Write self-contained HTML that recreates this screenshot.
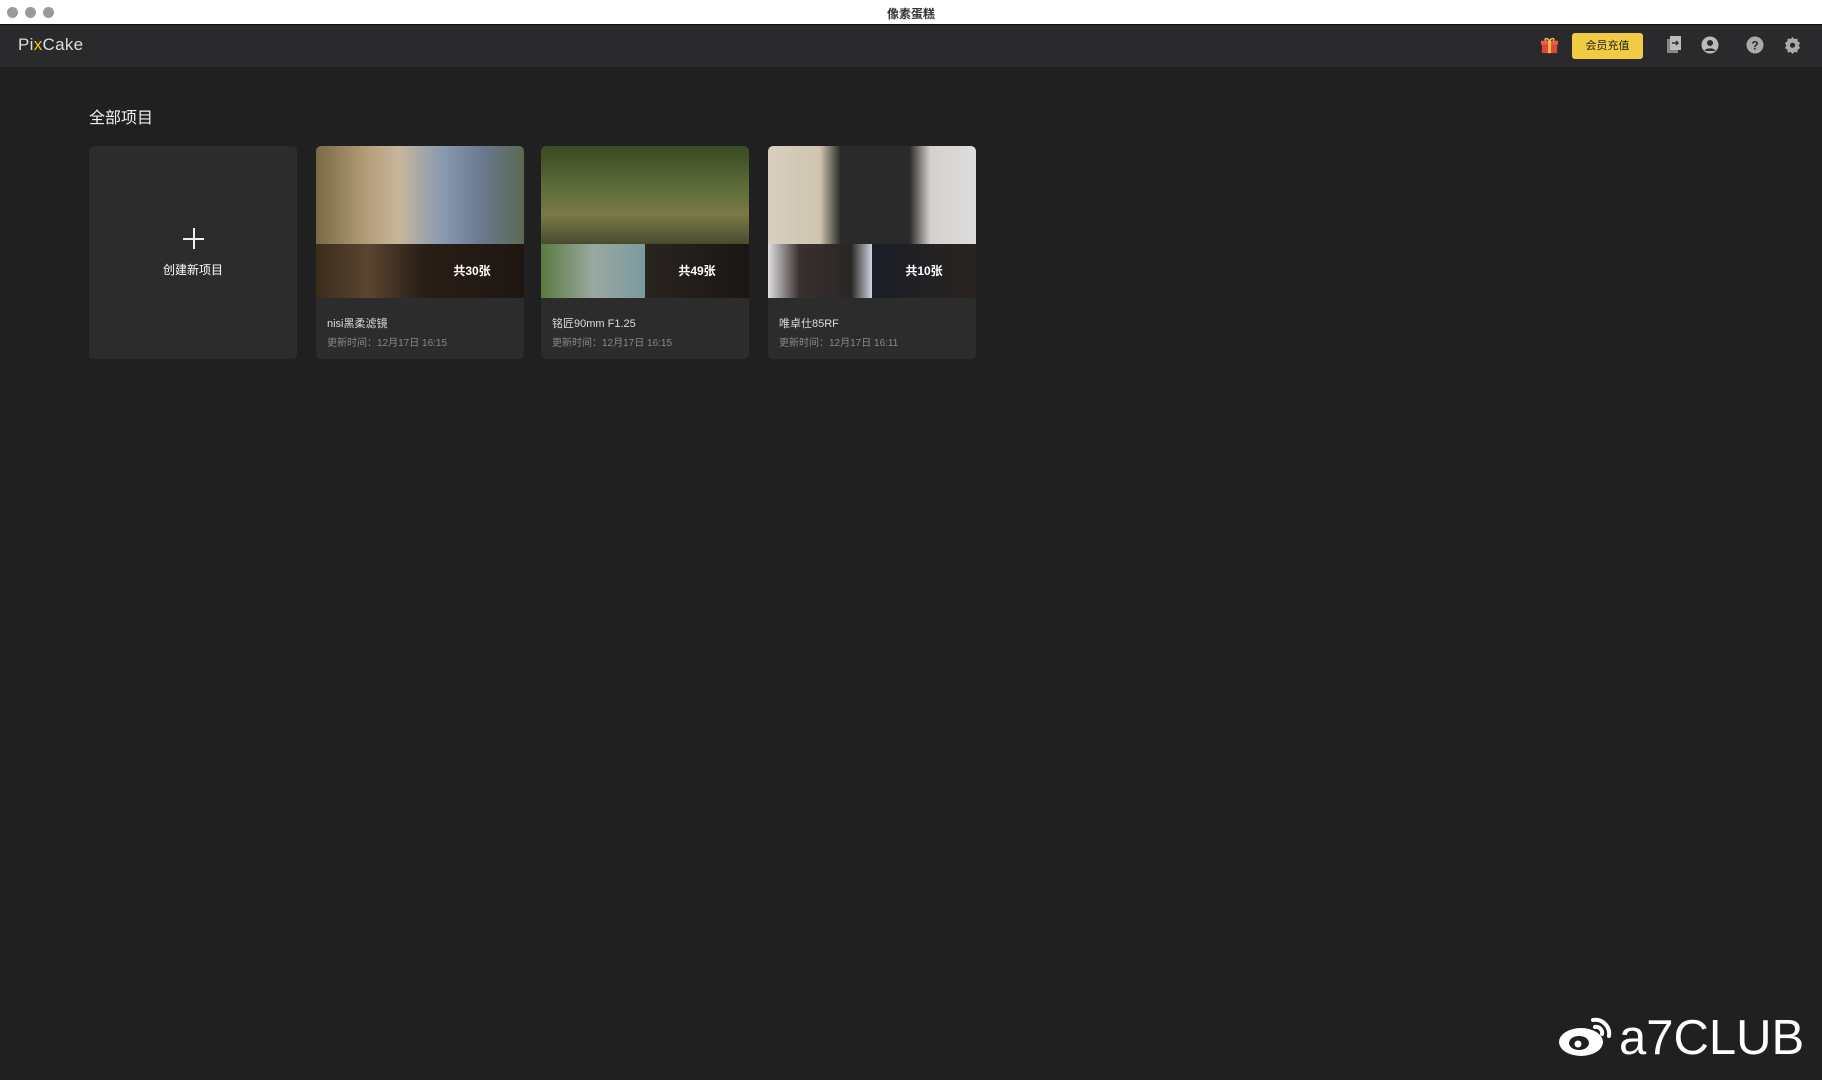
<!DOCTYPE html>
<html><head><meta charset="utf-8"><style>
*{margin:0;padding:0;box-sizing:border-box}
body{width:1822px;height:1080px;background:#202020;font-family:"Liberation Sans","Noto Sans CJK SC",sans-serif;position:relative;overflow:hidden;color:#ddd}
.tb{position:absolute;left:0;top:0;width:1822px;height:25px;background:#fff;border-bottom:1px solid #111}
.dot{position:absolute;top:7px;width:11px;height:11px;border-radius:50%;background:#9a9a9a}
.tt{position:absolute;top:5px;left:0;width:100%;text-align:center;font-size:12px;color:#333;font-weight:bold}
.nav{position:absolute;top:25px;left:0;width:1822px;height:42px;background:#2a2a2c}
.logo{position:absolute;left:18px;top:10px;font-size:17px;color:#ddd;letter-spacing:.3px}
.h{position:absolute;left:89px;top:104px;font-size:16px;color:#f0f0f0}
.card{position:absolute;top:146px;width:208px;height:213px;background:#2c2c2c;border-radius:5px;overflow:hidden}
.top{position:absolute;left:0;top:0;width:208px;height:98px}
.bl,.br{position:absolute;top:98px;width:104px;height:54px}
.bl{left:0}.br{left:104px}
.cnt{position:absolute;left:104px;top:98px;width:104px;height:54px;line-height:54px;text-align:center;font-size:12px;color:#fff;font-weight:bold}
.nm{position:absolute;left:11px;top:169px;font-size:11px;color:#ddd}
.dt{position:absolute;left:11px;top:188px;font-size:10px;color:#888}
</style></head><body>
<div class="tb"><div class="dot" style="left:7px"></div><div class="dot" style="left:25px"></div><div class="dot" style="left:43px"></div><div class="tt">像素蛋糕</div></div>
<div class="nav">
<div class="logo">Pi<span style="color:#f0c419">x</span>Cake</div>
<svg style="position:absolute;left:1540px;top:11px" width="19" height="19" viewBox="0 0 20 20"><rect x="2" y="6" width="16" height="12" rx="1" fill="#e2433c"/><rect x="1" y="5" width="18" height="4" fill="#f05a50"/><rect x="8.5" y="5" width="3" height="13" fill="#f5c542"/><path d="M10 5C7 1 4 3 6 5M10 5c3-4 6-2 4 0" stroke="#f5c542" stroke-width="1.5" fill="none"/></svg>
<div style="position:absolute;left:1572px;top:8px;width:71px;height:26px;background:#f2cb45;border-radius:3px;color:#222;font-size:11px;text-align:center;line-height:26px">会员充值</div>
<svg style="position:absolute;left:1666px;top:11px" width="16" height="18" viewBox="0 0 16 18"><rect x="1" y="3" width="11" height="14" fill="#888"/><rect x="4" y="0" width="11" height="14" fill="#bbb"/><path d="M6 7h6M10 5l2 2-2 2" stroke="#333" stroke-width="1.5" fill="none"/></svg>
<svg style="position:absolute;left:1701px;top:11px" width="18" height="18"><circle cx="9" cy="9" r="8.5" fill="#bbb"/><circle cx="9" cy="7" r="3" fill="#2a2a2c"/><path d="M3.5 15c1-3.5 10-3.5 11 0" fill="#2a2a2c"/></svg>
<svg style="position:absolute;left:1746px;top:11px" width="18" height="18"><circle cx="9" cy="9" r="8.5" fill="#aaa"/><text x="9" y="13.5" text-anchor="middle" font-size="12" font-weight="bold" fill="#2a2a2c" font-family="Liberation Sans">?</text></svg>
<svg style="position:absolute;left:1784px;top:11px" width="18" height="18" viewBox="0 0 18 18"><path d="M9 1l2 2.2 3-.6.5 3 2.5 1.6-1.5 2.8 1.5 2.8-2.5 1.6-.5 3-3-.6L9 19 7 16.8l-3 .6-.5-3L1 12.8 2.5 10 1 7.2l2.5-1.6.5-3 3 .6z" fill="#aaa" transform="scale(.95)"/><circle cx="8.5" cy="9.2" r="2.6" fill="#2a2a2c"/></svg>
</div>
<div class="h">全部项目</div>
<div class="card" style="left:89px"><div style="position:absolute;left:0;top:115px;width:208px;text-align:center;color:#fff;font-size:12px">创建新项目</div>
<div style="position:absolute;left:94px;top:92px;width:21px;height:1.5px;background:#eee"></div><div style="position:absolute;left:104px;top:82px;width:1.5px;height:21px;background:#eee"></div></div>
<div class="card" style="left:316px">
<div class="top" style="background:linear-gradient(90deg,#7a6a45 0%,#b59e7a 25%,#c8b59c 40%,#8a9bb0 60%,#6a7890 80%,#5a6a50 100%)"></div>
<div class="bl" style="background:linear-gradient(90deg,#3a2c1c,#5a4530,#2a2018)"></div><div class="br" style="background:linear-gradient(90deg,#2a1e16,#1e1612)"></div>
<div class="cnt">共30张</div><div class="nm">nisi黑柔滤镜</div><div class="dt">更新时间：12月17日 16:15</div></div>
<div class="card" style="left:541px">
<div class="top" style="background:linear-gradient(180deg,#3a4a22,#5a6a38 40%,#7a7a48 70%,#4a4a30)"></div>
<div class="bl" style="background:linear-gradient(90deg,#5a7a40,#9aa8a0,#7a9aa0)"></div><div class="br" style="background:linear-gradient(90deg,#2a2420,#1a1614)"></div>
<div class="cnt">共49张</div><div class="nm">铭匠90mm F1.25</div><div class="dt">更新时间：12月17日 16:15</div></div>
<div class="card" style="left:768px">
<div class="top" style="background:linear-gradient(90deg,#d8cfc0 0%,#cfc4b0 25%,#2a2a2a 35%,#2a2a2a 68%,#d5d0cc 78%,#ddd 100%)"></div>
<div class="bl" style="background:linear-gradient(90deg,#e0e0e0,#3a3030 30%,#2a2626 80%,#cfd4dc)"></div><div class="br" style="background:linear-gradient(90deg,#1a1e28,#2a2420)"></div>
<div class="cnt">共10张</div><div class="nm">唯卓仕85RF</div><div class="dt">更新时间：12月17日 16:11</div></div>
<svg style="position:absolute;left:1557px;top:1012px" width="58" height="46" viewBox="0 0 58 46"><ellipse cx="24" cy="30" rx="22" ry="14" fill="#fff"/><ellipse cx="22" cy="31" rx="10" ry="7" fill="#202020"/><circle cx="21" cy="32" r="3.5" fill="#fff"/><path d="M36 8a14 14 0 0 1 16 16M38 15a6 6 0 0 1 7 7" stroke="#fff" stroke-width="4" fill="none" stroke-linecap="round"/></svg>
<div style="position:absolute;left:1619px;top:1010px;font-size:49px;color:#fff;font-family:'Liberation Sans',sans-serif">a7CLUB</div>
</body></html>
